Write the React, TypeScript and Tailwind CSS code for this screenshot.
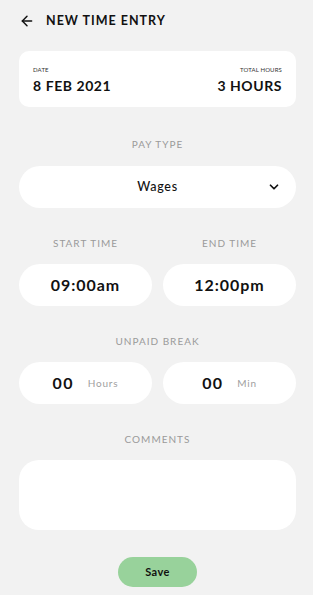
import { ArrowLeft, ChevronDown } from 'lucide-react';

const font = { fontFamily: 'Lato, "Noto Sans", sans-serif' };

function Label({ children }: { children: React.ReactNode }) {
  return (
    <div className="h-3 text-center text-[10px] leading-3 tracking-[0.1em] text-[#9a9a9a]">
      {children}
    </div>
  );
}

export default function App() {
  return (
    <div className="w-[313px] h-[595px] bg-[#f2f2f2] pl-[19px] pr-[17px] text-[#111]" style={font}>
      {/* Header */}
      <div className="flex h-[42px] items-center">
        <ArrowLeft size={16} strokeWidth={2.2} className="text-[#111]" />
        <span className="ml-[11px] text-[12.5px] font-bold tracking-[0.08em]">NEW TIME ENTRY</span>
      </div>

      {/* Date / total card */}
      <div className="mt-[9px] flex h-[56px] items-start justify-between rounded-[10px] bg-white pl-[14px] pr-[14px] pt-[15px]">
        <div>
          <div className="text-[6px] leading-[8px] tracking-wide text-[#333]">DATE</div>
          <div className="mt-[4px] text-[14px] font-bold leading-[16px] tracking-[0.04em]">8 FEB 2021</div>
        </div>
        <div className="text-right">
          <div className="text-[6px] leading-[8px] tracking-wide text-[#333]">TOTAL HOURS</div>
          <div className="mt-[4px] text-[14px] font-bold leading-[16px] tracking-[0.04em]">3 HOURS</div>
        </div>
      </div>

      {/* Pay type */}
      <div className="mt-[31px]">
        <Label>PAY TYPE</Label>
      </div>
      <div className="relative mt-[16px] flex h-[42px] items-center justify-center rounded-full bg-white">
        <span className="text-[12.5px] font-medium tracking-[0.06em]">Wages</span>
        <ChevronDown size={14} strokeWidth={3} className="absolute right-[15px]" />
      </div>

      {/* Times */}
      <div className="mt-[29px] grid grid-cols-2 gap-x-[11px]">
        <Label>START TIME</Label>
        <Label>END TIME</Label>
        <div className="mt-[15px] flex h-[42px] items-center justify-center rounded-full bg-white text-[16px] font-bold tracking-[0.06em]">
          09:00am
        </div>
        <div className="mt-[15px] flex h-[42px] items-center justify-center rounded-full bg-white text-[16px] font-bold tracking-[0.06em]">
          12:00pm
        </div>
      </div>

      {/* Unpaid break */}
      <div className="mt-[29px]">
        <Label>UNPAID BREAK</Label>
      </div>
      <div className="mt-[15px] grid grid-cols-2 gap-x-[11px]">
        <div className="flex h-[42px] items-center justify-center gap-[14px] rounded-full bg-white">
          <span className="text-[16px] font-bold tracking-[0.08em]">00</span>
          <span className="text-[10px] tracking-[0.08em] text-[#a0a0a0]">Hours</span>
        </div>
        <div className="flex h-[42px] items-center justify-center gap-[14px] rounded-full bg-white">
          <span className="text-[16px] font-bold tracking-[0.08em]">00</span>
          <span className="text-[10px] tracking-[0.08em] text-[#a0a0a0]">Min</span>
        </div>
      </div>

      {/* Comments */}
      <div className="mt-[29px]">
        <Label>COMMENTS</Label>
      </div>
      <div className="mt-[15px] h-[70px] rounded-[20px] bg-white" />

      {/* Save */}
      <div className="mt-[27px] flex justify-center">
        <button className="h-[30px] w-[79px] rounded-full bg-[#98d29b] text-[11px] font-bold tracking-[0.04em] text-[#111]">
          Save
        </button>
      </div>
    </div>
  );
}
